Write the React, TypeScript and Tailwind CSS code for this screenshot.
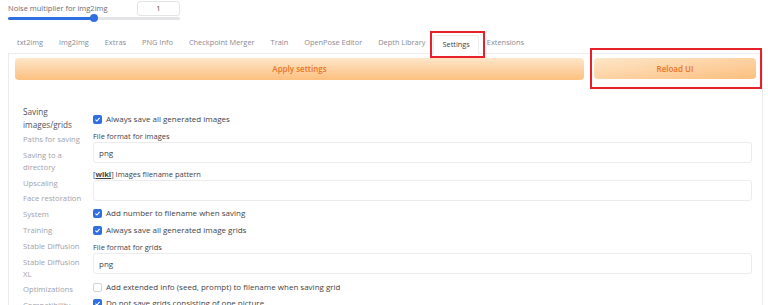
import React from "react";

const tabs = [
  "txt2img",
  "img2img",
  "Extras",
  "PNG Info",
  "Checkpoint Merger",
  "Train",
  "OpenPose Editor",
  "Depth Library",
  "Settings",
  "Extensions",
];

const sections = [
  { label: "Saving images/grids", active: true },
  { label: "Paths for saving" },
  { label: "Saving to a directory" },
  { label: "Upscaling" },
  { label: "Face restoration" },
  { label: "System" },
  { label: "Training" },
  { label: "Stable Diffusion" },
  { label: "Stable Diffusion XL" },
  { label: "Optimizations" },
  { label: "Compatibility" },
];

function Check({ checked, label, className = "" }: { checked: boolean; label: string; className?: string }) {
  return (
    <div className={"flex items-center gap-[4px] h-[16px] " + className}>
      {checked ? (
        <span className="flex items-center justify-center w-[9px] h-[9px] rounded-[2px] bg-[#2f6fe0]">
          <svg viewBox="0 0 10 10" className="w-[7px] h-[7px]">
            <path d="M2 5.2 L4.2 7.2 L8 2.8" fill="none" stroke="white" strokeWidth="1.6" />
          </svg>
        </span>
      ) : (
        <span className="w-[9px] h-[9px] rounded-[2px] border border-[#d4d4d8] bg-white" />
      )}
      <span className="text-[8px] text-[#3f3f46]">{label}</span>
    </div>
  );
}

function Field({
  label,
  value,
  wiki,
  className = "",
}: {
  label: string;
  value?: string;
  wiki?: boolean;
  className?: string;
}) {
  return (
    <div className={"flex flex-col " + className}>
      <div className="text-[7.5px] text-[#3f3f46] h-[12px] leading-[12px]">
        {wiki && (
          <span>
            [<span className="font-bold underline">wiki</span>]{" "}
          </span>
        )}
        {label}
      </div>
      <div className="h-[21px] border border-[#ececee] rounded-[3px] bg-white flex items-center px-[5px] text-[8px] text-[#3f3f46]">
        {value}
      </div>
    </div>
  );
}

export default function App() {
  return (
    <div
      className="relative w-[768px] h-[305px] overflow-hidden bg-white"
      style={{ fontFamily: '"Open Sans", "Noto Sans", sans-serif' }}
    >
      {/* slider block */}
      <div className="pl-[8px] pt-[1px] w-[180px]">
        <div className="flex items-center justify-between h-[15px]">
          <span className="text-[7.5px] text-[#6b6b75]">Noise multiplier for img2img</span>
          <div className="w-[43px] h-[15px] border border-[#e4e4e7] rounded-[3px] flex items-center justify-center text-[7.5px] text-[#3f3f46]">
            1
          </div>
        </div>
        <div className="relative h-[6px] mt-[-1px] flex items-center">
          <div className="w-full h-[3px] rounded-full bg-[#e4e4e7]">
            <div className="w-[86px] h-[3px] rounded-full bg-[#2f6fe0]" />
          </div>
          <div className="absolute left-[82px] w-[8px] h-[8px] rounded-full bg-[#2f6fe0]" />
        </div>
      </div>

      {/* tabs */}
      <div className="mt-[13px] ml-[8px] mr-[5px] flex items-end h-[20px] border-b border-[#ececee] pl-[1px]">
        {tabs.map((t) => (
          <div
            key={t}
            className={
              t === "Settings"
                ? "h-[19px] px-[8px] flex items-center text-[7.4px] text-[#3f3f46] bg-white border border-b-0 border-[#ececee] rounded-t-[3px] mb-[-1px]"
                : "h-[20px] px-[8px] flex items-center text-[7.4px] text-[#8a8a94]"
            }
          >
            {t}
          </div>
        ))}
      </div>

      {/* panel */}
      <div className="ml-[8px] mr-[5px] border-l border-r border-[#ececee] h-[260px]">
        <div className="flex gap-[10px] px-[6px] pt-[4px]">
          <div className="flex-1 h-[22px] rounded-[4px] bg-gradient-to-b from-[#fde6c8] to-[#fcbf7e] flex items-center justify-center text-[8px] font-semibold text-[#e8742a]">
            Apply settings
          </div>
          <div className="w-[162px] h-[21px] rounded-[4px] bg-gradient-to-br from-[#fde6c8] to-[#fcbf7e] flex items-center justify-center text-[8px] font-semibold text-[#e8742a]">
            Reload UI
          </div>
        </div>

        <div className="flex mt-[23px]">
          <div className="w-[84px] pl-[14px] pr-[10px] flex flex-col text-[7.7px] leading-[12px]">
            {sections.map((s) => (
              <div
                key={s.label}
                className={
                  s.active
                    ? "text-[#52525b] text-[8.2px] leading-[13px] pt-[1.5px] pb-[0.5px]"
                    : "text-[#a1a1aa] pt-[2px] pb-[1.8px]"
                }
              >
                {s.label}
              </div>
            ))}
          </div>
          <div className="w-[659px] flex flex-col pt-[8px]">
            <Check checked label="Always save all generated images" />
            <Field className="mt-[3px]" label="File format for images" value="png" />
            <Field className="mt-[5px]" wiki label="Images filename pattern" />
            <Check className="mt-[4px]" checked label="Add number to filename when saving" />
            <Check className="mt-[1px]" checked label="Always save all generated image grids" />
            <Field className="mt-[3px]" label="File format for grids" value="png" />
            <Check className="mt-[5px]" checked={false} label="Add extended info (seed, prompt) to filename when saving grid" />
            <Check checked label="Do not save grids consisting of one picture" />
          </div>
        </div>
      </div>

      {/* annotation boxes */}
      <div className="absolute left-[430px] top-[31px] w-[55px] h-[27px] border-2 border-[#e8202a]" />
      <div className="absolute left-[590px] top-[48px] w-[172px] h-[41px] border-2 border-[#e8202a]" />
    </div>
  );
}
